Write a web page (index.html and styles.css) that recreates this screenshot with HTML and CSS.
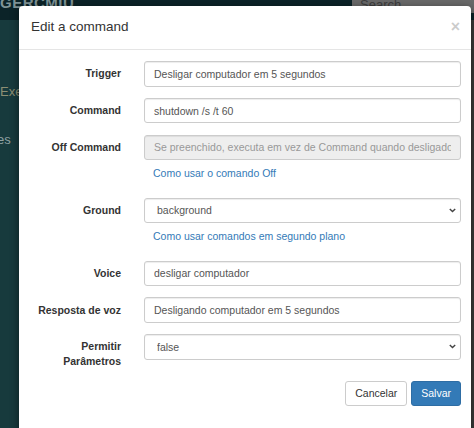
FILE: index.html
```html
<!DOCTYPE html>
<html lang="pt">
<head>
<meta charset="utf-8">
<title>Edit a command</title>
<link rel="stylesheet" href="styles.css">
</head>
<body>
<div class="page">
  <div class="topbar">
    <span class="brand">GERCMIU</span>
    <div class="search">Search</div>
  </div>
  <div class="main">
    <div class="sidebar">
      <div class="nav-item nav-exe">Exe</div>
      <div class="nav-item nav-es">es</div>
    </div>
    <div class="content"></div>
  </div>
</div>

<div class="modal">
  <div class="modal-header">
    <h4 class="modal-title">Edit a command</h4>
    <span class="close">&times;</span>
  </div>
  <form class="modal-body">
    <div class="form-group">
      <label class="control-label">Trigger</label>
      <div class="field">
        <input class="form-control" type="text" value="Desligar computador em 5 segundos">
      </div>
    </div>
    <div class="form-group">
      <label class="control-label">Command</label>
      <div class="field">
        <input class="form-control" type="text" value="shutdown /s /t 60">
      </div>
    </div>
    <div class="form-group">
      <label class="control-label">Off Command</label>
      <div class="field">
        <input class="form-control" type="text" disabled placeholder="Se preenchido, executa em vez de Command quando desligado">
        <a class="help-block" href="#">Como usar o comando Off</a>
      </div>
    </div>
    <div class="form-group">
      <label class="control-label">Ground</label>
      <div class="field">
        <div class="select-wrap">
          <select class="form-control select"><option>background</option></select>
          <svg class="chevron" width="7" height="5" viewBox="0 0 7 5"><path d="M0.8 0.9 L3.5 3.6 L6.2 0.9" fill="none" stroke="#444" stroke-width="1.4"/></svg>
        </div>
        <a class="help-block" href="#">Como usar comandos em segundo plano</a>
      </div>
    </div>
    <div class="form-group">
      <label class="control-label">Voice</label>
      <div class="field">
        <input class="form-control" type="text" value="desligar computador">
      </div>
    </div>
    <div class="form-group">
      <label class="control-label">Resposta de voz</label>
      <div class="field">
        <input class="form-control" type="text" value="Desligando computador em 5 segundos">
      </div>
    </div>
    <div class="form-group">
      <label class="control-label">Permitir<br>Parâmetros</label>
      <div class="field">
        <div class="select-wrap">
          <select class="form-control select"><option>false</option></select>
          <svg class="chevron" width="7" height="5" viewBox="0 0 7 5"><path d="M0.8 0.9 L3.5 3.6 L6.2 0.9" fill="none" stroke="#444" stroke-width="1.4"/></svg>
        </div>
      </div>
    </div>
    <div class="actions">
      <button type="button" class="btn btn-default">Cancelar</button>
      <button type="button" class="btn btn-primary">Salvar</button>
    </div>
  </form>
</div>
</body>
</html>
```
FILE: styles.css
```css
* { box-sizing: border-box; }
html, body {
  margin: 0;
  padding: 0;
  width: 474px;
  height: 428px;
  overflow: hidden;
  font-family: "Liberation Sans", Arial, sans-serif;
  background: #3a3a3a;
}
.page {
  width: 474px;
  height: 428px;
  display: flex;
  flex-direction: column;
}
.topbar {
  height: 20px;
  background: #0b2328;
  display: flex;
  justify-content: space-between;
  align-items: flex-start;
}
.brand {
  color: #7f9396;
  font-weight: bold;
  font-size: 15px;
  line-height: 12px;
  margin-top: -3px;
  letter-spacing: 0.5px;
}
.search {
  width: 122px;
  height: 13px;
  background: #6a6a6a;
  color: #3e3e3e;
  font-size: 13px;
  line-height: 10px;
  padding-left: 8px;
  overflow: hidden;
}
.main {
  flex: 1;
  display: flex;
}
.sidebar {
  width: 60px;
  background: #173a3d;
}
.nav-item {
  font-size: 13px;
  color: #8fa0a2;
  line-height: 14px;
}
.nav-exe { margin-top: 65px; color: #8b8f74; }
.nav-es { margin-top: 34px; margin-left: -3px; }
.content {
  flex: 1;
  background: #3a3a3a;
}

.modal {
  position: absolute;
  left: 19px;
  top: 6px;
  width: 452px;
  height: 440px;
  background: #fff;
  border-radius: 4px;
  box-shadow: 0 2px 8px rgba(0,0,0,0.5);
}
.modal-header {
  height: 44px;
  border-bottom: 1px solid #e5e5e5;
  padding: 0 11px 0 12px;
  display: flex;
  justify-content: space-between;
  align-items: center;
}
.modal-title {
  margin: -3px 0 0 0;
  font-size: 13.5px;
  font-weight: normal;
  color: #333;
}
.close {
  font-size: 16px;
  font-weight: bold;
  color: #000;
  opacity: 0.2;
  line-height: 1;
  margin-top: -1px;
}
.modal-body {
  margin: 0;
  padding: 11px 10px 0 0;
  display: flex;
  flex-direction: column;
  gap: 11.25px;
}
.form-group {
  display: flex;
  align-items: flex-start;
}
.control-label {
  width: 102px;
  flex: none;
  text-align: right;
  font-weight: bold;
  font-size: 10.5px;
  line-height: 15px;
  color: #333;
  padding-top: 5.25px;
}
.field {
  flex: 1;
  margin-left: 23px;
  display: flex;
  flex-direction: column;
}
.form-control {
  display: block;
  width: 100%;
  height: 25.5px;
  margin: 0;
  padding: 4.5px 9px;
  font-family: "Liberation Sans", Arial, sans-serif;
  font-size: 10.5px;
  line-height: 15px;
  color: #555;
  background: #fff;
  border: 0.75px solid #ccc;
  border-radius: 3px;
  box-shadow: inset 0 1px 1px rgba(0,0,0,0.075);
  outline: none;
}
.form-control:disabled {
  background: #eee;
  opacity: 1;
}
.form-control::placeholder {
  color: #999;
}
.select-wrap {
  position: relative;
}
.select {
  appearance: none;
  -webkit-appearance: none;
  padding-left: 12px;
}
.chevron {
  position: absolute;
  right: 5px;
  top: 10px;
}
.help-block {
  display: block;
  margin-top: 5.5px;
  margin-bottom: 5.75px;
  padding-left: 9px;
  font-size: 10.5px;
  line-height: 15px;
  color: #337ab7;
  text-decoration: none;
}
.actions {
  display: flex;
  justify-content: flex-end;
  gap: 4px;
}
.btn {
  height: 25.5px;
  padding: 0 9px;
  font-family: "Liberation Sans", Arial, sans-serif;
  font-size: 10.5px;
  line-height: 15px;
  border-radius: 3px;
  border: 0.75px solid;
  cursor: pointer;
}
.btn-default {
  background: #fff;
  color: #333;
  border-color: #ccc;
}
.btn-primary {
  background: #337ab7;
  color: #fff;
  border-color: #2e6da4;
}
```
